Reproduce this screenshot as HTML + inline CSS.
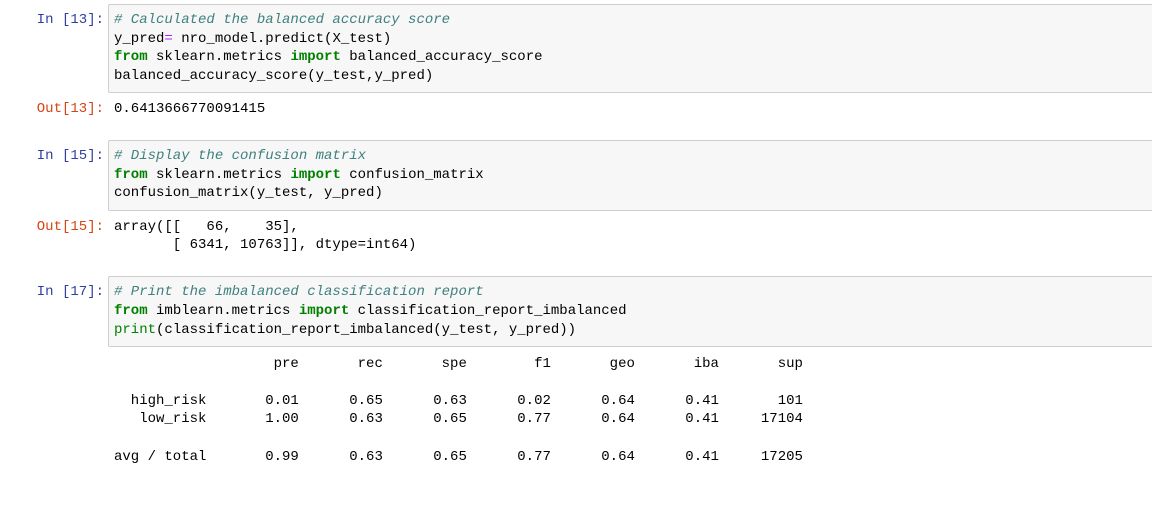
<!DOCTYPE html>
<html><head><meta charset="utf-8"><style>
html,body{margin:0;padding:0;background:#fff;width:1152px;height:522px;overflow:hidden}
body{position:relative;font-family:"Liberation Mono",monospace;font-size:14px;color:#000}
.l{position:absolute;left:114px;white-space:pre;line-height:18px;height:18px}
.p{position:absolute;width:104px;left:0;text-align:right;white-space:pre;line-height:18px}
.in{color:#303f9f}.out{color:#d84315}
.box{position:absolute;left:108px;right:-2px;background:#f7f7f7;border:1px solid #cfcfcf;border-radius:2px}
.c{color:#408080;font-style:italic}.k{color:#008000;font-weight:bold}.o{color:#aa22ff}.b{color:#008000}
</style></head><body>
<div class="box" style="top:4px;height:87px"></div>
<div class="p in" style="top:11px">In [13]:</div>
<div class="l" style="top:11px"><span class="c"># Calculated the balanced accuracy score</span></div>
<div class="l" style="top:30px">y_pred<span class="o">=</span> nro_model.predict(X_test)</div>
<div class="l" style="top:48px"><span class="k">from</span> sklearn.metrics <span class="k">import</span> balanced_accuracy_score</div>
<div class="l" style="top:67px">balanced_accuracy_score(y_test,y_pred)</div>
<div class="p out" style="top:100px">Out[13]:</div>
<div class="l" style="top:100px">0.6413666770091415</div>

<div class="box" style="top:140px;height:69px"></div>
<div class="p in" style="top:147px">In [15]:</div>
<div class="l" style="top:147px"><span class="c"># Display the confusion matrix</span></div>
<div class="l" style="top:166px"><span class="k">from</span> sklearn.metrics <span class="k">import</span> confusion_matrix</div>
<div class="l" style="top:184px">confusion_matrix(y_test, y_pred)</div>
<div class="p out" style="top:218px">Out[15]:</div>
<div class="l" style="top:218px">array([[   66,    35],
       [ 6341, 10763]], dtype=int64)</div>

<div class="box" style="top:276px;height:69px"></div>
<div class="p in" style="top:283px">In [17]:</div>
<div class="l" style="top:283px"><span class="c"># Print the imbalanced classification report</span></div>
<div class="l" style="top:302px"><span class="k">from</span> imblearn.metrics <span class="k">import</span> classification_report_imbalanced</div>
<div class="l" style="top:321px"><span class="b">print</span>(classification_report_imbalanced(y_test, y_pred))</div>
<div class="l" style="top:355px">                   pre       rec       spe        f1       geo       iba       sup</div>
<div class="l" style="top:392px">  high_risk       0.01      0.65      0.63      0.02      0.64      0.41       101</div>
<div class="l" style="top:410px">   low_risk       1.00      0.63      0.65      0.77      0.64      0.41     17104</div>
<div class="l" style="top:448px">avg / total       0.99      0.63      0.65      0.77      0.64      0.41     17205</div>
</body></html>
